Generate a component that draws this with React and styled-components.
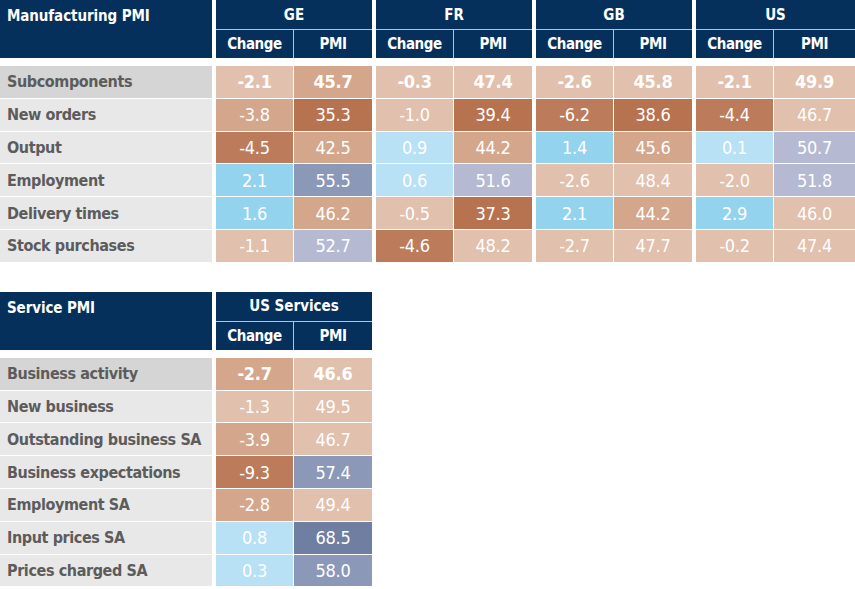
import React from "react";
import styled, { createGlobalStyle } from "styled-components";

const GlobalStyle = createGlobalStyle`
    body {
        margin: 0;
        background: #ffffff;
        font-family: "Liberation Sans Narrow", "DejaVu Sans Condensed", "Liberation Sans", sans-serif;
        font-stretch: condensed;
    }
`;

const NAVY = "#05305b";

const COLORS = {
    pl: "#e1c0ad",
    pm: "#d4a78c",
    pd: "#bc7c5c",
    px: "#b77250",
    bl: "#b8e1f5",
    bm: "#94d3ee",
    ll: "#b5bad2",
    lm: "#8c98b8",
    ld: "#6f7fa2",
};

const Page = styled.div`
    width: 855px;
    display: flex;
    flex-direction: column;
    gap: 29px;
`;

const Table = styled.div`
    display: flex;
    flex-direction: column;
`;

const HeaderRow = styled.div`
    display: flex;
    height: 58px;
    margin-bottom: 8px;
`;

const LabelHead = styled.div`
    width: 212px;
    background: ${NAVY};
    color: #fff;
    font-weight: 700;
    font-size: 15px;
    letter-spacing: -0.1px;
    padding: 7px 7px;
    box-sizing: border-box;
`;

const GroupHead = styled.div`
    width: ${(p) => (p.$last ? "159px" : "156px")};
    margin-left: 4px;
    display: flex;
    flex-direction: column;
    gap: 1px;
    background: #b9c2d3;
`;

const Country = styled.div`
    height: 29px;
    background: ${NAVY};
    color: #fff;
    font-weight: 700;
    font-size: 15px;
    display: flex;
    align-items: center;
    justify-content: center;
`;

const SubRow = styled.div`
    flex: 1;
    display: flex;
    gap: 1px;
`;

const SubHead = styled.div`
    flex: ${(p) => (p.$first ? "0 0 77px" : "1")};
    background: ${NAVY};
    color: #fff;
    font-weight: 700;
    font-size: 15px;
    letter-spacing: -0.4px;
    display: flex;
    align-items: center;
    justify-content: center;
`;

const DataRow = styled.div`
    display: flex;
    height: 31.8px;
    margin-bottom: 1px;
`;

const LabelCell = styled.div`
    width: 212px;
    background: ${(p) => (p.$first ? "#d5d5d5" : "#e8e8e8")};
    color: #5c5c5c;
    font-weight: 700;
    font-size: 16px;
    letter-spacing: -0.4px;
    white-space: nowrap;
    padding-left: 7px;
    box-sizing: border-box;
    display: flex;
    align-items: center;
`;

const Group = styled.div`
    width: ${(p) => (p.$last ? "159px" : "156px")};
    margin-left: 4px;
    display: flex;
    gap: 1px;
`;

const Cell = styled.div`
    flex: ${(p) => (p.$first ? "0 0 77px" : "1")};
    background: ${(p) => COLORS[p.$tone]};
    color: #fff;
    font-weight: ${(p) => (p.$bold ? 700 : 400)};
    font-size: 18px;
    letter-spacing: -0.3px;
    display: flex;
    align-items: center;
    justify-content: center;
`;

const manufacturing = {
    title: "Manufacturing PMI",
    groups: ["GE", "FR", "GB", "US"],
    rows: [
        ["Subcomponents", [["-2.1", "pl"], ["45.7", "pm"], ["-0.3", "pl"], ["47.4", "pl"], ["-2.6", "pl"], ["45.8", "pl"], ["-2.1", "pl"], ["49.9", "pl"]]],
        ["New orders", [["-3.8", "pm"], ["35.3", "px"], ["-1.0", "pl"], ["39.4", "px"], ["-6.2", "pd"], ["38.6", "px"], ["-4.4", "pd"], ["46.7", "pl"]]],
        ["Output", [["-4.5", "pd"], ["42.5", "pm"], ["0.9", "bl"], ["44.2", "pm"], ["1.4", "bm"], ["45.6", "pm"], ["0.1", "bl"], ["50.7", "ll"]]],
        ["Employment", [["2.1", "bm"], ["55.5", "lm"], ["0.6", "bl"], ["51.6", "ll"], ["-2.6", "pl"], ["48.4", "pl"], ["-2.0", "pl"], ["51.8", "ll"]]],
        ["Delivery times", [["1.6", "bm"], ["46.2", "pm"], ["-0.5", "pl"], ["37.3", "px"], ["2.1", "bm"], ["44.2", "pm"], ["2.9", "bm"], ["46.0", "pl"]]],
        ["Stock purchases", [["-1.1", "pl"], ["52.7", "ll"], ["-4.6", "pd"], ["48.2", "pl"], ["-2.7", "pl"], ["47.7", "pl"], ["-0.2", "pl"], ["47.4", "pl"]]],
    ],
};

const services = {
    title: "Service PMI",
    groups: ["US Services"],
    rows: [
        ["Business activity", [["-2.7", "pm"], ["46.6", "pl"]]],
        ["New business", [["-1.3", "pl"], ["49.5", "pl"]]],
        ["Outstanding business SA", [["-3.9", "pm"], ["46.7", "pl"]]],
        ["Business expectations", [["-9.3", "pd"], ["57.4", "lm"]]],
        ["Employment SA", [["-2.8", "pm"], ["49.4", "pl"]]],
        ["Input prices SA", [["0.8", "bl"], ["68.5", "ld"]]],
        ["Prices charged SA", [["0.3", "bl"], ["58.0", "lm"]]],
    ],
};

const PmiTable = ({ data }) => {
    const n = data.groups.length;
    return (
        <Table>
            <HeaderRow>
                <LabelHead>{data.title}</LabelHead>
                {data.groups.map((g, i) => (
                    <GroupHead key={g} $last={n > 1 && i === n - 1}>
                        <Country>{g}</Country>
                        <SubRow>
                            <SubHead $first>Change</SubHead>
                            <SubHead>PMI</SubHead>
                        </SubRow>
                    </GroupHead>
                ))}
            </HeaderRow>
            {data.rows.map(([label, cells], r) => (
                <DataRow key={label}>
                    <LabelCell $first={r === 0}>{label}</LabelCell>
                    {data.groups.map((g, i) => (
                        <Group key={g} $last={n > 1 && i === n - 1}>
                            <Cell $first $bold={r === 0} $tone={cells[i * 2][1]}>
                                {cells[i * 2][0]}
                            </Cell>
                            <Cell $bold={r === 0} $tone={cells[i * 2 + 1][1]}>
                                {cells[i * 2 + 1][0]}
                            </Cell>
                        </Group>
                    ))}
                </DataRow>
            ))}
        </Table>
    );
};

export default function App() {
    return (
        <>
            <GlobalStyle />
            <Page>
                <PmiTable data={manufacturing} />
                <PmiTable data={services} />
            </Page>
        </>
    );
}
